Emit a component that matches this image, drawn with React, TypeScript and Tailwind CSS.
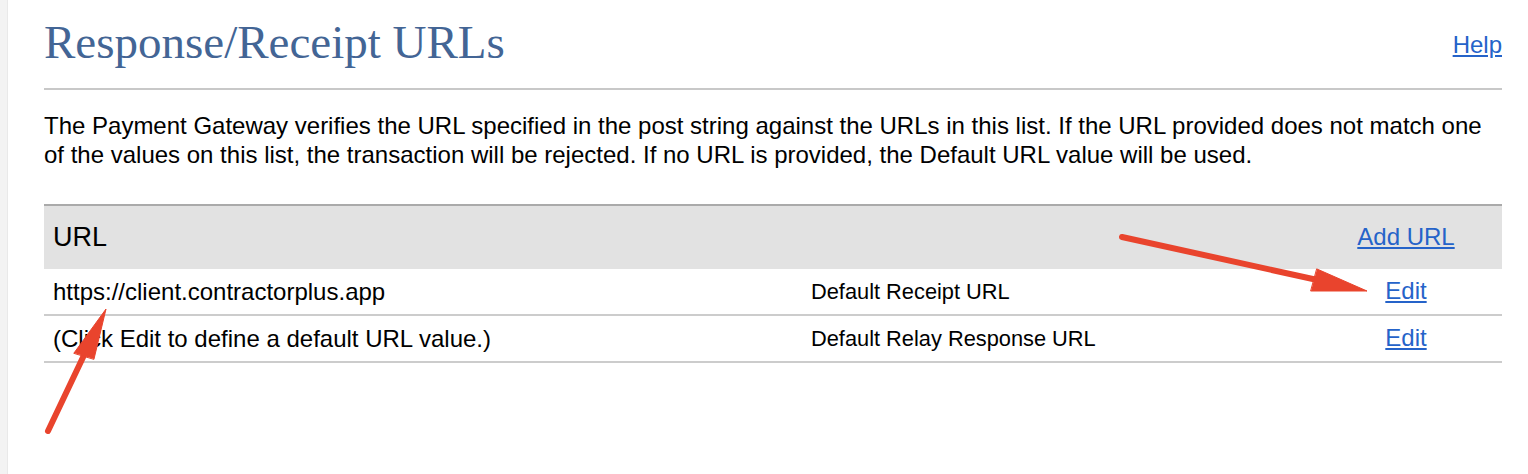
import React from 'react';

const rows = [
  { url: 'https://client.contractorplus.app', type: 'Default Receipt URL' },
  { url: '(Click Edit to define a default URL value.)', type: 'Default Relay Response URL' },
];

function Arrows() {
  return (
    <svg className="pointer-events-none absolute left-0 top-0" width="1528" height="474" viewBox="0 0 1528 474">
      <g fill="#e9442d" stroke="#e9442d" strokeLinecap="round" strokeLinejoin="round">
        <line x1="1122" y1="237" x2="1322" y2="281" strokeWidth="6" />
        <polygon points="1317,269 1367,291 1311,291" strokeWidth="1" />
        <line x1="48" y1="431" x2="86" y2="351" strokeWidth="6" />
        <polygon points="74,353 106,309 94,359" strokeWidth="1" />
      </g>
    </svg>
  );
}

export default function App() {
  return (
    <div className="relative flex min-h-[474px] w-[1528px] bg-white" style={{ fontFamily: '"Liberation Sans", Arial, sans-serif' }}>
      <div className="w-[8px] shrink-0 border-r border-[#e9e9e9] bg-[#f3f3f3]" />

      <div className="flex-1 pl-[36px] pr-[26px]">
        {/* title */}
        <div className="flex h-[90px] items-start justify-between border-b-2 border-[#c8c8c8] pt-[19px]">
          <h1
            className="text-[47px] leading-[47px] text-[#436595]"
            style={{ fontFamily: '"Liberation Serif", "Times New Roman", serif' }}
          >
            Response/Receipt URLs
          </h1>
          <a href="#" className="mt-[14px] text-[24px] leading-[24px] text-[#2563c9] underline underline-offset-2">
            Help
          </a>
        </div>

        <p className="mt-[21px] text-[24px] leading-[29px] text-black">
          The Payment Gateway verifies the URL specified in the post string against the URLs in this list. If the URL provided does not match one
          <br />
          of the values on this list, the transaction will be rejected. If no URL is provided, the Default URL value will be used.
        </p>

        {/* table */}
        <div className="mt-[35px] border-t-2 border-[#aaaaaa]">
          <div className="grid h-[63px] grid-cols-[767px_499px_1fr] items-center bg-[#e2e2e2]">
            <div className="pl-[9px] text-[27px] leading-[27px] text-black">URL</div>
            <div />
            <div className="pt-[2px] text-center">
              <a href="#" className="text-[24px] leading-[24px] text-[#2563c9] underline underline-offset-2">
                Add URL
              </a>
            </div>
          </div>
          {rows.map((r) => (
            <div key={r.type} className="grid h-[47px] grid-cols-[767px_499px_1fr] items-center border-b-2 border-[#cccccc]">
              <div className="pl-[9px] text-[24px] leading-[24px] text-black">{r.url}</div>
              <div className="text-[21.8px] leading-[24px] text-black">{r.type}</div>
              <div className="pt-[2px] text-center">
                <a href="#" className="text-[24px] leading-[24px] text-[#2563c9] underline underline-offset-2">
                  Edit
                </a>
              </div>
            </div>
          ))}
        </div>
      </div>

      <Arrows />
    </div>
  );
}
